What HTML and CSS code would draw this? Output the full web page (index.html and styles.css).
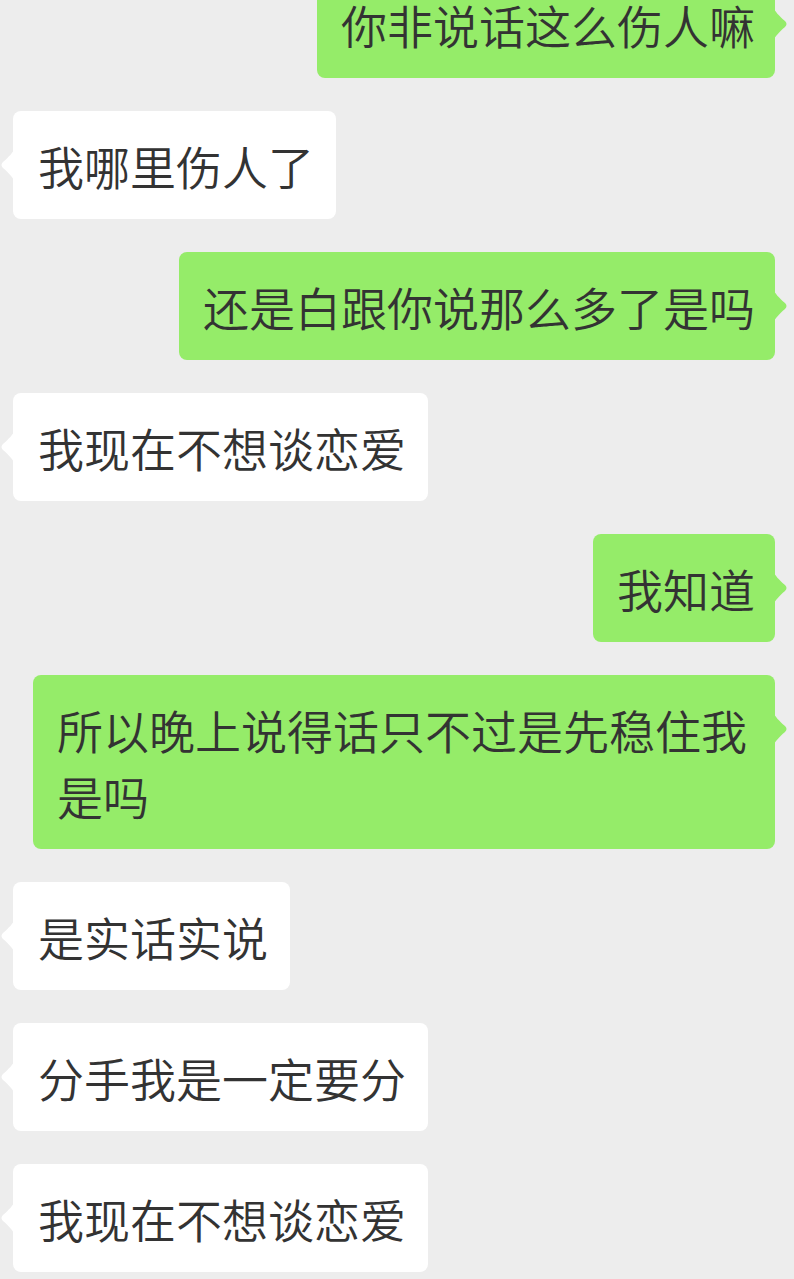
FILE: index.html
```html
<!DOCTYPE html>
<html lang="zh-CN">
<head>
<meta charset="utf-8">
<title>Chat</title>
<link rel="stylesheet" href="styles.css">
</head>
<body>
<div class="chat">
  <div class="row me"><div class="bubble">你非说话这么伤人嘛</div></div>
  <div class="row other"><div class="bubble">我哪里伤人了</div></div>
  <div class="row me"><div class="bubble">还是白跟你说那么多了是吗</div></div>
  <div class="row other"><div class="bubble">我现在不想谈恋爱</div></div>
  <div class="row me"><div class="bubble">我知道</div></div>
  <div class="row me"><div class="bubble">所以晚上说得话只不过是先稳住我是吗</div></div>
  <div class="row other"><div class="bubble">是实话实说</div></div>
  <div class="row other"><div class="bubble">分手我是一定要分</div></div>
  <div class="row other"><div class="bubble">我现在不想谈恋爱</div></div>
</div>
</body>
</html>
```

FILE: styles.css
```css
html, body {
  margin: 0;
  padding: 0;
  background: #ededed;
  height: 100%;
  overflow: hidden;
}
.chat {
  display: flex;
  flex-direction: column;
  gap: 33px;
  margin-top: -30px;
  padding: 0 19px 0 13px;
  font-family: "Noto Sans CJK SC", "Noto Sans", sans-serif;
  font-weight: 350;
  font-size: 46px;
  line-height: 66px;
  color: #333333;
}
.row {
  display: flex;
}
.row.me {
  justify-content: flex-end;
}
.row.other {
  justify-content: flex-start;
}
.bubble {
  position: relative;
  max-width: 698px;
  padding: 21px 20px 21px 24px;
  border-radius: 8px;
  word-break: break-all;
}
.me .bubble {
  background: #95ec69;
}
.other .bubble {
  background: #ffffff;
  padding: 21px 22px 21px 25px;
}
.bubble::after {
  content: "";
  position: absolute;
  top: 39px;
  width: 14px;
  height: 30px;
}
.me .bubble::after {
  right: -13px;
  background: #95ec69;
  clip-path: path("M0 0 C2 3 4 6 11 12 Q14 15 11 18 C4 24 2 27 0 30 Z");
}
.other .bubble::after {
  left: -13px;
  background: #ffffff;
  clip-path: path("M14 0 C12 3 10 6 3 12 Q0 15 3 18 C10 24 12 27 14 30 Z");
}
```
